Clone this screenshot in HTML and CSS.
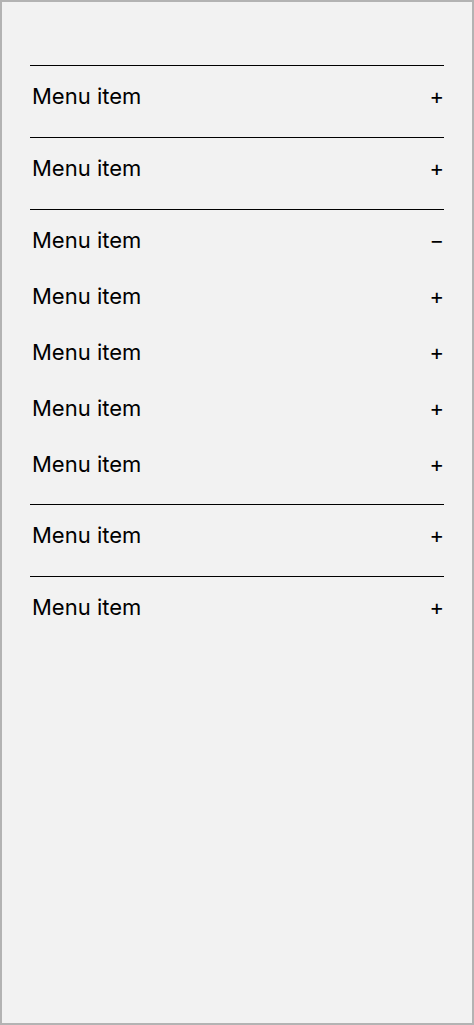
FILE: index.html
```html
<!DOCTYPE html>
<html lang="en">
<head>
  <meta charset="UTF-8">
  <meta name="viewport" content="width=device-width, initial-scale=1.0">
  <title>Menu</title>
  <link rel="stylesheet" href="styles.css">
</head>
<body>
  <div class="frame">
    <ul class="menu">
      <li class="item">
        <div class="row"><span>Menu item</span><span class="toggle">+</span></div>
      </li>
      <li class="item">
        <div class="row"><span>Menu item</span><span class="toggle">+</span></div>
      </li>
      <li class="item open">
        <div class="row"><span>Menu item</span><span class="toggle">&minus;</span></div>
        <div class="row sub"><span>Menu item</span><span class="toggle">+</span></div>
        <div class="row sub"><span>Menu item</span><span class="toggle">+</span></div>
        <div class="row sub"><span>Menu item</span><span class="toggle">+</span></div>
        <div class="row sub"><span>Menu item</span><span class="toggle">+</span></div>
      </li>
      <li class="item">
        <div class="row"><span>Menu item</span><span class="toggle">+</span></div>
      </li>
      <li class="item">
        <div class="row"><span>Menu item</span><span class="toggle">+</span></div>
      </li>
    </ul>
  </div>
</body>
</html>
```

FILE: styles.css
```css
* {
  box-sizing: border-box;
}
body {
  margin: 0;
  font-family: Inter, "Liberation Sans", sans-serif;
  background: #f2f2f2;
  color: #000;
}
.frame {
  height: 1025px;
  border: 2px solid #b3b3b3;
  background: #f2f2f2;
  padding: 63px 28px 0 28px;
}
.menu {
  list-style: none;
  margin: 0;
  padding: 0;
}
.item {
  border-top: 1px solid #000;
  padding: 16px 0 27px;
}
.item.open {
  padding-bottom: 26px;
}
.row {
  display: flex;
  justify-content: space-between;
  align-items: center;
  height: 28px;
  line-height: 28px;
  font-size: 22px;
  padding-left: 2px;
}
.row.sub {
  margin-top: 28px;
}
.toggle {
  font-size: 22px;
  width: 16px;
  text-align: right;
}
```
